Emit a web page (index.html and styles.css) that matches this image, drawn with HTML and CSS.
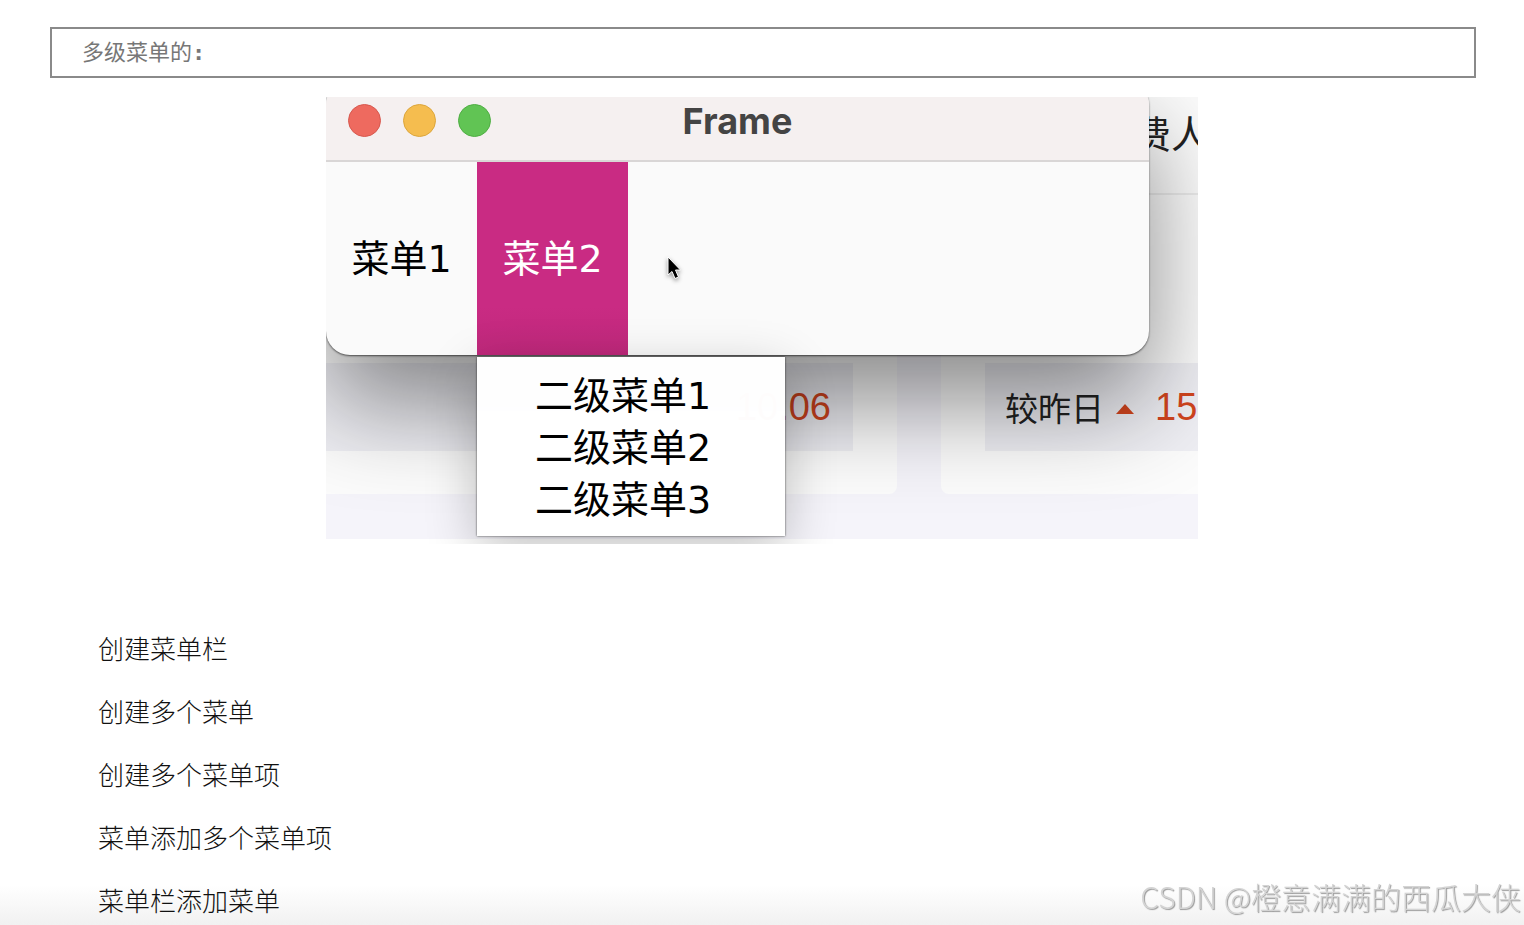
FILE: index.html
```html
<!DOCTYPE html>
<html lang="zh-CN">
<head>
  <meta charset="UTF-8">
  <meta name="viewport" content="width=device-width, initial-scale=1.0">
  <title>多级菜单</title>
  <link rel="stylesheet" href="styles.css">
</head>
<body>
  <h1 class="note">多级菜单的<b>:</b></h1>

  <div class="demo">
    <!-- Cards behind the window -->
    <div class="backdrop">
      <div class="card card-left">
        <div class="stat"><span class="number">10.06</span></div>
      </div>
      <div class="card card-right">
        <div class="card-head">费人</div>
        <div class="stat">
          <span class="label">较昨日</span>
          <svg class="arrow" width="18" height="10" viewBox="0 0 18 10"><path d="M9 0L18 10H0z" fill="#d2451e"/></svg>
          <span class="number">15</span>
        </div>
      </div>
    </div>

    <div class="window">
      <div class="titlebar">
        <div class="lights">
          <span class="light red"></span>
          <span class="light yellow"></span>
          <span class="light green"></span>
        </div>
        <span class="title">Frame</span>
      </div>
      <nav class="menubar">
        <button class="menu" type="button">菜单1</button>
        <div class="menu-wrap">
          <button class="menu active" type="button">菜单2</button>
          <div class="dropdown">
            <button type="button">二级菜单1</button>
            <button type="button">二级菜单2</button>
            <button type="button">二级菜单3</button>
          </div>
        </div>
      </nav>
    </div>

    <svg class="cursor" width="20" height="28" viewBox="0 0 20 28">
      <path d="M3 2V20L7 16.500L10 23.500L13.500 22L10.500 15H15.500z" fill="#000" stroke="#fff" stroke-width="1"/>
    </svg>
  </div>

  <ul class="steps">
    <li>创建菜单栏</li>
    <li>创建多个菜单</li>
    <li>创建多个菜单项</li>
    <li>菜单添加多个菜单项</li>
    <li>菜单栏添加菜单</li>
  </ul>

  <div class="watermark">CSDN @橙意满满的西瓜大侠</div>
</body>
</html>
```
FILE: styles.css
```css
* {
  box-sizing: border-box;
}
body {
  margin: 0;
  padding: 27px 48px 0;
  min-height: 100vh;
  background: #fff linear-gradient(#fff, #f1f1f1) bottom / 100% 40px no-repeat;
  color: #111;
  font-family: "Liberation Sans", "Noto Sans CJK SC", sans-serif;
}
button {
  border: 0;
  padding: 0;
  background: none;
  color: inherit;
  font: inherit;
}
.note {
  margin: 0 0 0 2px;
  padding: 0 30px;
  border: 2px solid #8a8a8a;
  color: #777;
  font-family: "DejaVu Sans Mono", "Noto Sans CJK SC", monospace;
  font-size: 22px;
  font-weight: 400;
  line-height: 47px;
}

/* Demo picture */
.demo {
  position: relative;
  width: 872px;
  max-width: 100%;
  height: 447px;
  margin: 19px auto 0;
  overflow: hidden;
}
.backdrop {
  display: grid;
  grid-template-columns: 571px 1fr;
  gap: 44px;
  height: 442px;
  padding-bottom: 45px;
  background: #f5f4fa;
  overflow: hidden;
}
.card {
  display: flex;
  flex-direction: column;
  justify-content: space-between;
  min-width: 0;
  padding-bottom: 43px;
  background: #fcfcfc;
}
.card-left {
  justify-content: flex-end;
  padding-right: 44px;
  border-radius: 0 0 8px 0;
}
.card-right {
  padding-left: 44px;
  border-radius: 0 0 0 8px;
}
.card-head {
  height: 98px;
  padding-left: 148px;
  border-bottom: 2px solid #ececec;
  color: #222;
  font-size: 38px;
  line-height: 76px;
  white-space: nowrap;
}
.stat {
  display: flex;
  align-items: center;
  height: 88px;
  padding: 0 0 0 20px;
  background: #efeff4;
  white-space: nowrap;
}
.card-left .stat {
  justify-content: flex-end;
  padding-right: 22px;
}
.number {
  color: #d2451e;
  font-size: 38px;
}
.label {
  color: #222;
  font-size: 33px;
}
.arrow {
  margin: 4px 21px 0 12px;
  flex: none;
}

.window {
  position: absolute;
  top: -16px;
  left: 0;
  width: 823px;
  border-radius: 24px;
  background: #fafafa;
  box-shadow: 0 1px 2px rgba(0,0,0,0.6), 0 48px 100px rgba(0,0,0,0.46);
}
.titlebar {
  display: grid;
  grid-template-columns: 1fr auto 1fr;
  align-items: center;
  height: 81px;
  padding: 0 22px;
  border-bottom: 2px solid #d9d6d6;
  border-radius: 24px 24px 0 0;
  background: #f5f0f0;
}
.lights {
  display: flex;
  gap: 22px;
}
.light {
  width: 33px;
  height: 33px;
  border-radius: 50%;
}
.red {
  background: #ee6a5f;
  border: 1px solid #d7584e;
}
.yellow {
  background: #f5bd4f;
  border: 1px solid #dca63c;
}
.green {
  background: #61c454;
  border: 1px solid #4fae43;
}
.title {
  color: #444;
  font-family: Inter, sans-serif;
  font-size: 36px;
  font-weight: 700;
}
.menubar {
  display: flex;
  height: 193px;
  color: #000;
  font-family: "DejaVu Sans", "Noto Sans CJK SC", sans-serif;
  font-size: 38px;
}
.menu {
  width: 151px;
  height: 100%;
  padding-bottom: 6px;
}
.menu-wrap {
  position: relative;
}
.active {
  background: linear-gradient(#c92b83 75%, #bf287b);
  color: #fff;
}
.dropdown {
  position: absolute;
  top: 100%;
  left: 0;
  display: flex;
  flex-direction: column;
  width: 308px;
  margin-top: 2px;
  padding: 13px 0 10px 58px;
  background: rgba(255,255,255,0.99);
  box-shadow: 0 0 2px rgba(0,0,0,0.7), 0 14px 48px rgba(0,0,0,0.24);
}
.dropdown button {
  height: 52px;
  text-align: left;
  line-height: 52px;
}
.cursor {
  position: absolute;
  top: 158px;
  left: 339px;
  filter: drop-shadow(0 2px 2px rgba(0,0,0,0.4));
}

.steps {
  display: flex;
  flex-direction: column;
  gap: 36px;
  margin: 90px 0 0;
  padding: 0 0 0 50px;
  list-style: none;
  font-family: "Noto Sans CJK SC", serif;
  font-size: 26px;
  font-weight: 300;
  line-height: 27px;
}
.watermark {
  position: fixed;
  right: 3px;
  bottom: 7px;
  color: #d4d4d4;
  font-family: "Noto Sans CJK SC", sans-serif;
  font-size: 30px;
  font-weight: 300;
  line-height: 44px;
  text-shadow: 1px 1px 1px #999;
}
```
